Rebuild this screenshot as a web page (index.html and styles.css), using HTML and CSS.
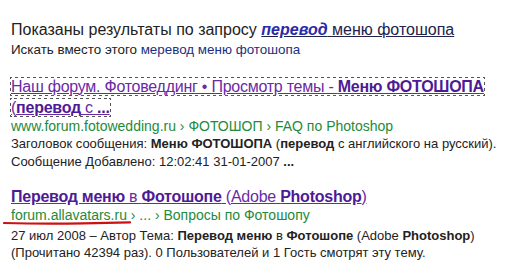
FILE: index.html
```html
<!DOCTYPE html>
<html lang="ru">
<head>
<meta charset="utf-8">
<link rel="stylesheet" href="styles.css">
</head>
<body>
<div class="page">
  <div class="spell">
    <p class="showing">Показаны результаты по запросу <a class="q" href="#"><b><i>перевод</i></b> меню фотошопа</a></p>
    <p class="instead">Искать вместо этого <a class="alt" href="#">меревод меню фотошопа</a></p>
  </div>
  <div class="result first">
    <h3 class="title"><a class="focus" href="#">Наш форум. Фотоведдинг • Просмотр темы - <b>Меню ФОТОШОПА</b> (<b>перевод</b> с <b>...</b></a></h3>
    <div class="url">www.forum.fotowedding.ru › ФОТОШОП › FAQ по Photoshop</div>
    <div class="snippet">Заголовок сообщения: <b>Меню ФОТОШОПА</b> (<b>перевод</b> с английского на русский).<br>Сообщение Добавлено: 12:02:41 31-01-2007 <b>...</b></div>
  </div>
  <div class="result second">
    <h3 class="title"><a href="#"><b>Перевод меню</b> в <b>Фотошопе</b> (Adobe <b>Photoshop</b>)</a></h3>
    <div class="url"><span class="marked">forum.allavatars.ru ›<svg class="scribble" width="130" height="6" viewBox="0 0 130 6"><path d="M1 3 Q40 4.2 80 3.4 T127 2.4" stroke="#cc1111" stroke-width="2.2" fill="none" stroke-linecap="round"/></svg></span> ... › Вопросы по Фотошопу</div>
    <div class="snippet">27 июл 2008 – Автор Тема: <b>Перевод меню</b> в <b>Фотошопе</b> (Adobe <b>Photoshop</b>)<br>(Прочитано 42394 раз). 0 Пользователей и 1 Гость смотрят эту тему.</div>
  </div>
</div>
</body>
</html>
```

FILE: styles.css
```css
html, body {
  margin: 0;
  padding: 0;
  background: #ffffff;
}
.page {
  padding: 18.5px 0 0 11px;
  font-family: "Liberation Sans", Arial, sans-serif;
  color: #222222;
}
p { margin: 0; }
.showing {
  font-size: 16px;
  line-height: 22px;
  color: #222222;
}
.q {
  color: #22224a;
  text-decoration: underline;
}
.q b i { color: #2a2aa8; }
.instead {
  font-size: 13.4px;
  line-height: 18px;
  color: #222222;
}
.alt {
  color: #1a3080;
  text-decoration: none;
}
.result.first { margin-top: 17px; }
.result.second { margin-top: 15px; }
.title {
  margin: 0;
  font-size: 16px;
  font-weight: normal;
  line-height: 21px;
  letter-spacing: -0.25px;
}
.title a {
  color: #6a2aa6;
  text-decoration: underline;
}
.title b { color: #4e1a96; }
.focus {
  outline: 1px dotted #555;
}
.url {
  font-size: 14px;
  line-height: 15px;
  color: #1e8a3a;
  margin-top: 1px;
}
.first .snippet { margin-top: 1px; }
.second .url { margin-top: 1px; }
.marked {
  position: relative;
}
.scribble {
  position: absolute;
  left: -8px;
  top: 13px;
}
.snippet {
  font-size: 13px;
  line-height: 18px;
  color: #222222;
}
.second .snippet {
  margin-top: 4px;
  line-height: 17px;
}
```
